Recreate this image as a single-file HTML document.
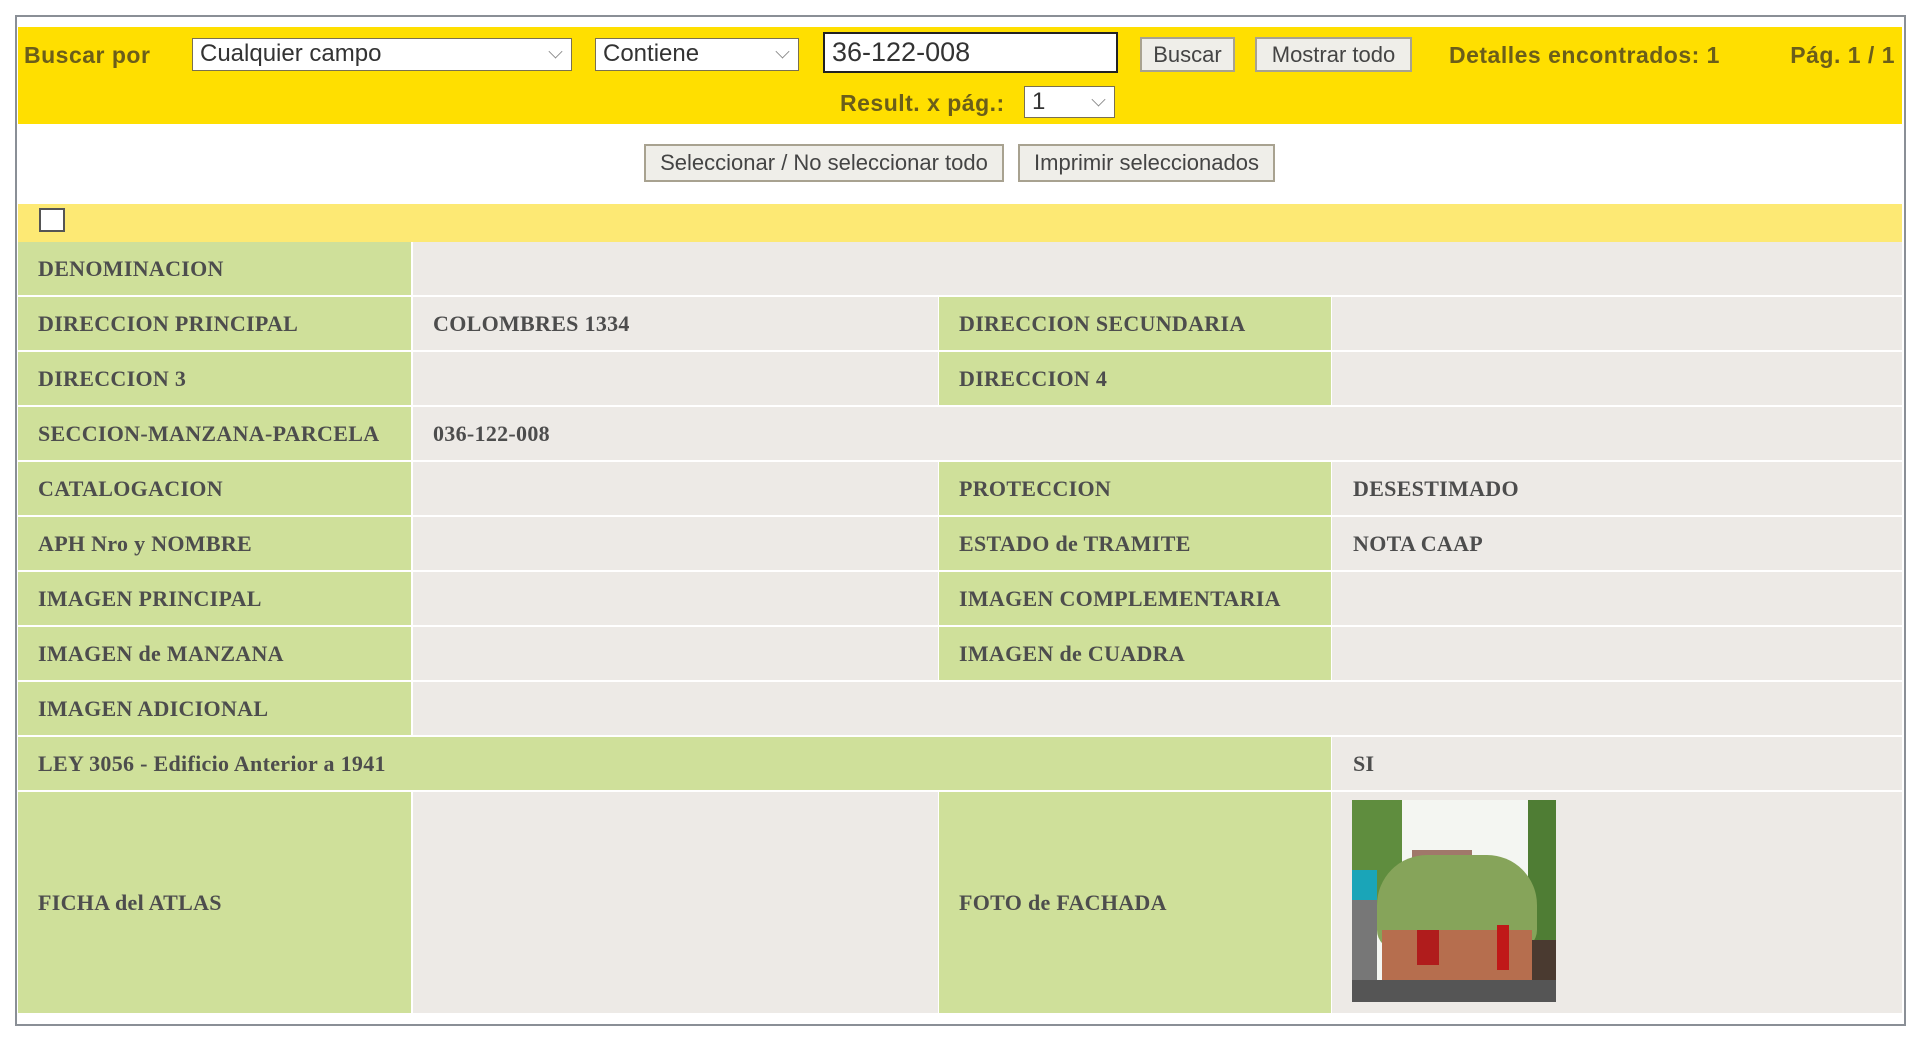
<!DOCTYPE html>
<html><head><meta charset="utf-8"><style>
*{box-sizing:border-box;margin:0;padding:0}
body{width:1920px;height:1049px;background:#fff;position:relative;overflow:hidden;font-family:"Liberation Sans",sans-serif}
.abs{position:absolute}
.outer{left:15px;top:15px;width:1891px;height:1011px;border:2px solid #8a8f96}
.ybar{left:18px;top:27px;width:1884px;height:97px;background:#ffdf00}
.t{position:absolute;color:#6b5e1a;font-weight:bold;font-size:23px;white-space:nowrap;letter-spacing:.5px}
.sel{position:absolute;background:#fff;border:1px solid #7a7050;font-size:24px;color:#333;padding-left:7px;line-height:30px;white-space:nowrap}
.sel i{position:absolute;right:10px;top:7px;width:11px;height:11px;border-right:1.5px solid #888;border-bottom:1.5px solid #888;transform:rotate(45deg) scale(.9,.9);}
.btn{position:absolute;background:#efeee9;border:2px solid #a8a290;font-size:22px;color:#444;text-align:center;white-space:nowrap}
.row{position:absolute;left:18px;width:1884px}
.c{position:absolute;top:0;bottom:0}
.g{background:#cfe09a}.e{background:#edeae6}
.L{position:absolute;font-family:"Liberation Serif",serif;font-weight:bold;font-size:22px;color:#4d4d4d;white-space:nowrap;letter-spacing:.3px}
</style></head><body>
<div class="abs outer"></div>
<div class="abs ybar"></div>
<div class="t" style="left:24px;top:42px">Buscar por</div>
<div class="sel" style="left:192px;top:38px;width:380px;height:33px">Cualquier campo<i></i></div>
<div class="sel" style="left:595px;top:38px;width:204px;height:33px">Contiene<i></i></div>
<div class="sel" style="left:823px;top:32px;width:295px;height:41px;border:2px solid #222;line-height:36px;font-size:27px">36-122-008</div>
<div class="btn" style="left:1140px;top:37px;width:95px;height:35px;line-height:31px">Buscar</div>
<div class="btn" style="left:1255px;top:37px;width:157px;height:35px;line-height:31px">Mostrar todo</div>
<div class="t" style="left:1449px;top:42px">Detalles encontrados: 1</div>
<div class="t" style="right:25px;top:42px">Pág. 1 / 1</div>
<div class="t" style="left:840px;top:90px">Result. x pág.:</div>
<div class="sel" style="left:1024px;top:86px;width:91px;height:32px">1<i></i></div>
<div class="btn" style="left:644px;top:144px;width:360px;height:38px;line-height:34px">Seleccionar / No seleccionar todo</div>
<div class="btn" style="left:1018px;top:144px;width:257px;height:38px;line-height:34px">Imprimir seleccionados</div>
<div class="abs" style="left:18px;top:204px;width:1884px;height:38px;background:#fde974"></div>
<div class="abs" style="left:39px;top:208px;width:26px;height:24px;background:#fff;border:2px solid #555"></div>

<div class="row" style="top:242px;height:53px"><div class="c g" style="left:0;width:393px"></div><div class="c e" style="left:395px;right:0"></div><div class="L" style="left:20px;top:14px">DENOMINACION</div></div>
<div class="row" style="top:297px;height:53px"><div class="c g" style="left:0;width:393px"></div><div class="c e" style="left:395px;width:525px"></div><div class="c g" style="left:921px;width:392px"></div><div class="c e" style="left:1314px;right:0"></div><div class="L" style="left:20px;top:14px">DIRECCION PRINCIPAL</div><div class="L" style="left:415px;top:14px">COLOMBRES 1334</div><div class="L" style="left:941px;top:14px">DIRECCION SECUNDARIA</div></div>
<div class="row" style="top:352px;height:53px"><div class="c g" style="left:0;width:393px"></div><div class="c e" style="left:395px;width:525px"></div><div class="c g" style="left:921px;width:392px"></div><div class="c e" style="left:1314px;right:0"></div><div class="L" style="left:20px;top:14px">DIRECCION 3</div><div class="L" style="left:941px;top:14px">DIRECCION 4</div></div>
<div class="row" style="top:407px;height:53px"><div class="c g" style="left:0;width:393px"></div><div class="c e" style="left:395px;right:0"></div><div class="L" style="left:20px;top:14px">SECCION-MANZANA-PARCELA</div><div class="L" style="left:415px;top:14px">036-122-008</div></div>
<div class="row" style="top:462px;height:53px"><div class="c g" style="left:0;width:393px"></div><div class="c e" style="left:395px;width:525px"></div><div class="c g" style="left:921px;width:392px"></div><div class="c e" style="left:1314px;right:0"></div><div class="L" style="left:20px;top:14px">CATALOGACION</div><div class="L" style="left:941px;top:14px">PROTECCION</div><div class="L" style="left:1335px;top:14px">DESESTIMADO</div></div>
<div class="row" style="top:517px;height:53px"><div class="c g" style="left:0;width:393px"></div><div class="c e" style="left:395px;width:525px"></div><div class="c g" style="left:921px;width:392px"></div><div class="c e" style="left:1314px;right:0"></div><div class="L" style="left:20px;top:14px">APH Nro y NOMBRE</div><div class="L" style="left:941px;top:14px">ESTADO de TRAMITE</div><div class="L" style="left:1335px;top:14px">NOTA CAAP</div></div>
<div class="row" style="top:572px;height:53px"><div class="c g" style="left:0;width:393px"></div><div class="c e" style="left:395px;width:525px"></div><div class="c g" style="left:921px;width:392px"></div><div class="c e" style="left:1314px;right:0"></div><div class="L" style="left:20px;top:14px">IMAGEN PRINCIPAL</div><div class="L" style="left:941px;top:14px">IMAGEN COMPLEMENTARIA</div></div>
<div class="row" style="top:627px;height:53px"><div class="c g" style="left:0;width:393px"></div><div class="c e" style="left:395px;width:525px"></div><div class="c g" style="left:921px;width:392px"></div><div class="c e" style="left:1314px;right:0"></div><div class="L" style="left:20px;top:14px">IMAGEN de MANZANA</div><div class="L" style="left:941px;top:14px">IMAGEN de CUADRA</div></div>
<div class="row" style="top:682px;height:53px"><div class="c g" style="left:0;width:393px"></div><div class="c e" style="left:395px;right:0"></div><div class="L" style="left:20px;top:14px">IMAGEN ADICIONAL</div></div>
<div class="row" style="top:737px;height:53px"><div class="c g" style="left:0;width:1313px"></div><div class="c e" style="left:1314px;right:0"></div><div class="L" style="left:20px;top:14px">LEY 3056 - Edificio Anterior a 1941</div><div class="L" style="left:1335px;top:14px">SI</div></div>
<div class="row" style="top:792px;height:221px"><div class="c g" style="left:0;width:393px"></div><div class="c e" style="left:395px;width:525px"></div><div class="c g" style="left:921px;width:392px"></div><div class="c e" style="left:1314px;right:0"></div><div class="L" style="left:20px;top:98px">FICHA del ATLAS</div><div class="L" style="left:941px;top:98px">FOTO de FACHADA</div></div>

<div class="abs" style="left:1352px;top:800px;width:204px;height:202px;overflow:hidden;background:#f4f6f2">
 <div class="abs" style="left:0;top:0;width:50px;height:110px;background:#5f8d3e;border-radius:0 0 30px 0"></div>
 <div class="abs" style="left:176px;top:0;width:28px;height:140px;background:#4f7d34"></div>
 <div class="abs" style="left:60px;top:50px;width:60px;height:20px;background:#a0786a"></div>
 <div class="abs" style="left:25px;top:55px;width:160px;height:95px;border-radius:50px 50px 20px 20px;background:#86a45a"></div>
 <div class="abs" style="left:30px;top:130px;width:150px;height:55px;background:#b66e4e"></div>
 <div class="abs" style="left:0;top:70px;width:25px;height:30px;background:#1aa5b8"></div>
 <div class="abs" style="left:0;top:100px;width:25px;height:80px;background:#777"></div>
 <div class="abs" style="left:65px;top:130px;width:22px;height:35px;background:#b01c1c"></div>
 <div class="abs" style="left:145px;top:125px;width:12px;height:45px;background:#c01818"></div>
 <div class="abs" style="left:180px;top:140px;width:24px;height:40px;background:#4a3a30"></div>
 <div class="abs" style="left:0;top:180px;width:204px;height:22px;background:#555"></div>
</div>
</body></html>
